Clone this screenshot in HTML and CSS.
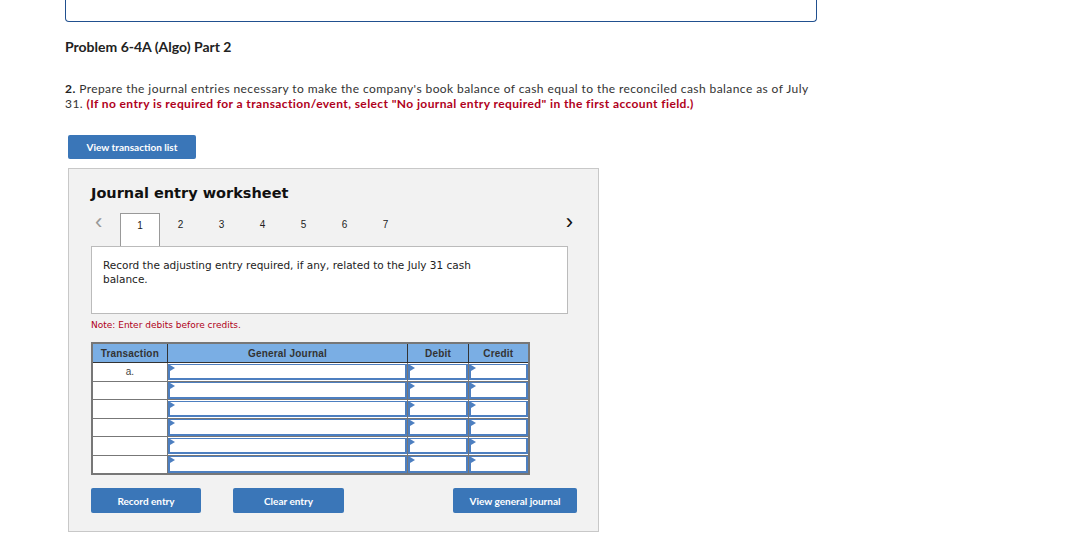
FILE: index.html
```html
<!doctype html>
<html>

<head>
    <meta charset="utf-8" />
    <link rel="stylesheet" href="styles.css">
</head>

<body>

    <div class="top-box"></div>

    <div class="main">
        <h2 class="part-title">Problem 6-4A (Algo) Part 2</h2>

        <p class="question"><b>2.</b> Prepare the journal entries necessary to make the company's book balance of cash equal to the reconciled cash balance as of July 31. <span class="hint">(If no entry is required for a transaction/event, select "No journal entry required" in the first account field.)</span></p>

        <button class="btn btn-list">View transaction list</button>

        <div class="worksheet">
            <div class="ws-title">Journal entry worksheet</div>

            <div class="tabs">
                <span class="arrow prev">&lsaquo;</span>
                <span class="tab active">1</span>
                <span class="tab">2</span>
                <span class="tab">3</span>
                <span class="tab">4</span>
                <span class="tab">5</span>
                <span class="tab">6</span>
                <span class="tab">7</span>
                <span class="spacer"></span>
                <span class="arrow next">&rsaquo;</span>
            </div>

            <div class="description">Record the adjusting entry required, if any, related to the July 31 cash<br>balance.</div>

            <div class="note">Note: Enter debits before credits.</div>

            <table class="journal">
                <thead>
                    <tr>
                        <th class="c-trans">Transaction</th>
                        <th class="c-acct">General Journal</th>
                        <th class="c-num">Debit</th>
                        <th class="c-num">Credit</th>
                    </tr>
                </thead>
                <tbody id="rows"></tbody>
            </table>

            <div class="actions">
                <button class="btn btn-record">Record entry</button>
                <button class="btn btn-clear">Clear entry</button>
                <span class="spacer"></span>
                <button class="btn btn-view">View general journal</button>
            </div>
        </div>
    </div>

    <script>
        const rows = document.getElementById("rows");
        const labels = ["a.", "", "", "", "", ""];

        labels.forEach(label => {
            const tr = document.createElement("tr");
            tr.innerHTML = `<td class="trans">${label}</td>` +
                `<td><div class="field"></div></td>` +
                `<td><div class="field"></div></td>` +
                `<td><div class="field"></div></td>`;
            rows.appendChild(tr);
        });
    </script>

</body>

</html>
```

FILE: styles.css
```css
html,
body {
    margin: 0;
    background-color: white;
    font-family: Lato, "Liberation Sans", sans-serif;
    color: #222;
}

.top-box {
    margin-left: 65px;
    width: 750px;
    height: 21px;
    border: 1px solid #21508f;
    border-top: none;
    border-radius: 0 0 4px 4px;
}

.main {
    padding-left: 65px;
}

.part-title {
    margin: 16px 0 0 0;
    font-size: 14px;
    font-weight: bold;
    color: #222;
}

.question {
    margin: 26px 0 0 0;
    width: 760px;
    font-size: 12px;
    line-height: 15px;
    letter-spacing: 0.42px;
    color: #333;
}

.question b {
    color: #222;
}

.question .hint {
    color: #b00020;
    font-weight: bold;
    letter-spacing: 0.4px;
}

.btn {
    font-family: Lato, "Liberation Sans", sans-serif;
    font-size: 10px;
    font-weight: bold;
    color: white;
    background-color: #3a76b8;
    border: none;
    border-radius: 2px;
    height: 25px;
    padding: 0;
    letter-spacing: 0;
}

.btn-list {
    display: block;
    margin: 24px 0 0 3px;
    width: 128px;
    height: 24px;
}

.worksheet {
    margin: 9px 0 0 3px;
    width: 531px;
    height: 364px;
    box-sizing: border-box;
    background-color: #f2f2f2;
    border: 1px solid #c8c8c8;
    padding: 0 30px 0 22px;
    font-family: "DejaVu Sans", Verdana, sans-serif;
}

.ws-title {
    margin-top: 16px;
    font-size: 14.5px;
    font-weight: bold;
    color: #111;
}

.tabs {
    display: flex;
    align-items: flex-end;
    margin-top: 12px;
    height: 33px;
    font-family: "Liberation Sans", Arial, sans-serif;
    font-size: 10px;
    color: #222;
}

.tabs .arrow {
    align-self: flex-start;
    font-size: 22px;
    line-height: 18px;
    width: 29px;
    padding-left: 4px;
    box-sizing: border-box;
    color: #999;
}

.tabs .arrow.next {
    color: #111;
    width: auto;
    padding: 0;
    margin-right: -5px;
}

.tabs .tab {
    width: 41px;
    height: 33px;
    box-sizing: border-box;
    padding-top: 6px;
    text-align: center;
    align-self: flex-start;
}

.tabs .tab.active {
    width: 40px;
    background-color: white;
    border: 1px solid #999;
    border-bottom: none;
}

.tabs .spacer {
    flex-grow: 1;
}

.description {
    height: 68px;
    box-sizing: border-box;
    background-color: white;
    border: 1px solid #bbb;
    padding: 11px 11px;
    font-size: 10.5px;
    line-height: 14px;
    color: #222;
}

.note {
    margin-top: 6px;
    font-size: 9px;
    color: #b00020;
}

.journal {
    margin-top: 12px;
    border-collapse: collapse;
    width: 439px;
    font-family: "Liberation Sans", Arial, sans-serif;
    font-size: 10px;
}

.journal th {
    height: 18px;
    padding: 0;
    background-color: #7aaee4;
    border: 1px solid #333;
    border-top: 2px solid #777;
    color: #333;
    font-weight: bold;
    letter-spacing: 0.2px;
}

.journal th:first-child {
    border-left: 2px solid #777;
}

.journal th:last-child {
    border-right: 2px solid #777;
}

.journal .c-trans {
    width: 74px;
}

.journal .c-acct {
    width: 244px;
}

.journal .c-num {
    width: 60px;
}

.journal td {
    height: 17.5px;
    padding: 0;
    border: 1px solid #777;
    background-color: white;
}

.journal td:first-child {
    border-left: 2px solid #777;
}

.journal td:last-child {
    border-right: 2px solid #777;
}

.journal tr:last-child td {
    border-bottom: 2px solid #777;
}

.journal td.trans {
    text-align: center;
    vertical-align: top;
    color: #444;
    font-size: 10px;
    padding-top: 3px;
    height: 14.5px;
}

.journal .field {
    position: relative;
    height: 13.5px;
    border: 2px solid #4d7fc0;
    border-top-width: 1px;
    background-color: white;
}

.journal .field:before {
    content: '';
    position: absolute;
    top: 0;
    left: 0;
    border-top: 3px solid transparent;
    border-bottom: 3px solid transparent;
    border-left: 5px solid #4d7fc0;
}

.actions {
    display: flex;
    margin-top: 13px;
    width: 486px;
}

.actions .spacer {
    flex-grow: 1;
}

.btn-record {
    width: 110px;
}

.btn-clear {
    margin-left: 32px;
    width: 111px;
}

.btn-view {
    width: 124px;
}
```
